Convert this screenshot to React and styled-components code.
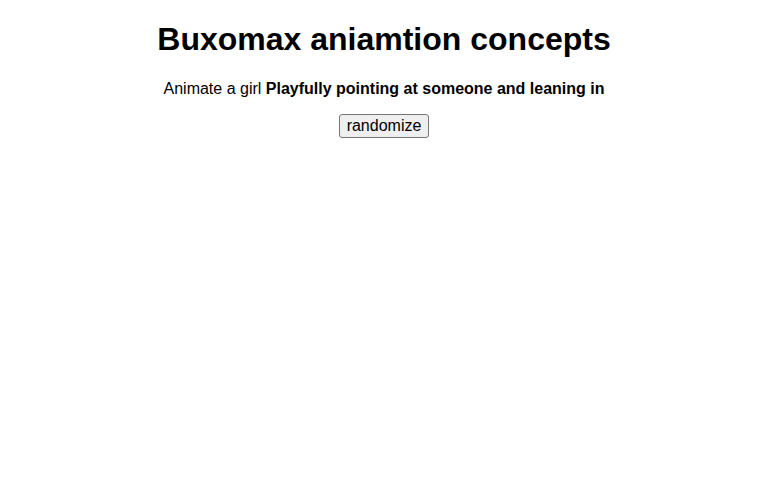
import styled, { createGlobalStyle } from "styled-components";

const GlobalStyle = createGlobalStyle`
  body {
    margin: 0;
    background: #fff;
    color: #000;
    font-family: "Liberation Sans", Arial, sans-serif;
  }
`

const Page = styled.div`
  text-align: center;
  padding: 0 8px;
`

const Title = styled.h1`
  font-size: 32px;
  font-weight: bold;
  margin: 21.44px 0;
`

const Prompt = styled.p`
  font-size: 16px;
  margin: 16px 0;
`

const Action = styled.b`
  font-weight: bold;
`

const RandomButton = styled.button`
  font-family: "Liberation Sans", Arial, sans-serif;
  font-size: 16px;
  line-height: 18px;
  color: #000;
  background-color: #efefef;
  border: 1px solid #767676;
  border-radius: 3px;
  padding: 2px 7px;
  cursor: pointer;
`

function App () {
  return (
    <Page>
      <GlobalStyle />
      <Title>Buxomax aniamtion concepts</Title>
      <Prompt>
        Animate a girl <Action>Playfully pointing at someone and leaning in</Action>
      </Prompt>
      <RandomButton>randomize</RandomButton>
    </Page>
  )
}

export default App
